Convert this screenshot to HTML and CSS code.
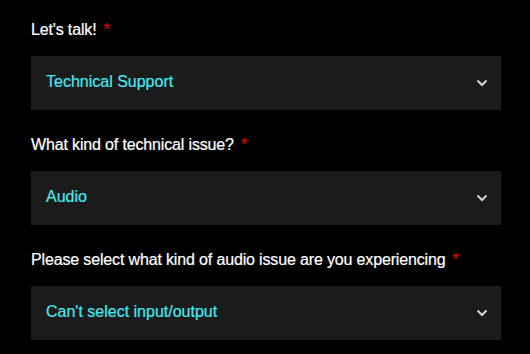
FILE: index.html
```html
<!DOCTYPE html>
<html>
<head>
<meta charset="utf-8">
<link rel="stylesheet" href="styles.css">
</head>
<body>
<div class="form">
  <div class="field">
    <div class="label">Let's talk!<span class="req">*</span></div>
    <div class="select"><span class="value">Technical Support</span>
      <svg class="chev" width="12" height="8" viewBox="0 0 12 8"><polyline points="1.5,1.5 6,6 10.5,1.5" fill="none" stroke="#d4d4d4" stroke-width="2"/></svg>
    </div>
  </div>
  <div class="field">
    <div class="label">What kind of technical issue?<span class="req">*</span></div>
    <div class="select"><span class="value">Audio</span>
      <svg class="chev" width="12" height="8" viewBox="0 0 12 8"><polyline points="1.5,1.5 6,6 10.5,1.5" fill="none" stroke="#d4d4d4" stroke-width="2"/></svg>
    </div>
  </div>
  <div class="field">
    <div class="label">Please select what kind of audio issue are you experiencing<span class="req">*</span></div>
    <div class="select"><span class="value">Can't select input/output</span>
      <svg class="chev" width="12" height="8" viewBox="0 0 12 8"><polyline points="1.5,1.5 6,6 10.5,1.5" fill="none" stroke="#d4d4d4" stroke-width="2"/></svg>
    </div>
  </div>
</div>
</body>
</html>
```
FILE: styles.css
```css
html, body {
  margin: 0;
  padding: 0;
  background: #000;
}
body {
  width: 530px;
  height: 354px;
  overflow: hidden;
  font-family: "Liberation Sans", Arial, sans-serif;
}
.form {
  padding: 20px 29px 0 31px;
  display: flex;
  flex-direction: column;
  gap: 25px;
}
.field {
  display: flex;
  flex-direction: column;
  gap: 16px;
}
.label {
  color: #fff;
  font-size: 16px;
  line-height: 20px;
  height: 20px;
  letter-spacing: -0.15px;
  -webkit-text-stroke: 0.2px #fff;
}
.req {
  color: #e00000;
  margin-left: 7px;
  -webkit-text-stroke: 0.2px #e00000;
}
.select {
  height: 54px;
  background: #1b1b1b;
  display: flex;
  align-items: center;
  justify-content: space-between;
  padding: 0 13px 0 15px;
}
.value {
  color: #45e9f0;
  font-size: 16px;
  line-height: 20px;
  margin-top: -2px;
  -webkit-text-stroke: 0.2px #45e9f0;
}
.chev {
  display: block;
}
```
